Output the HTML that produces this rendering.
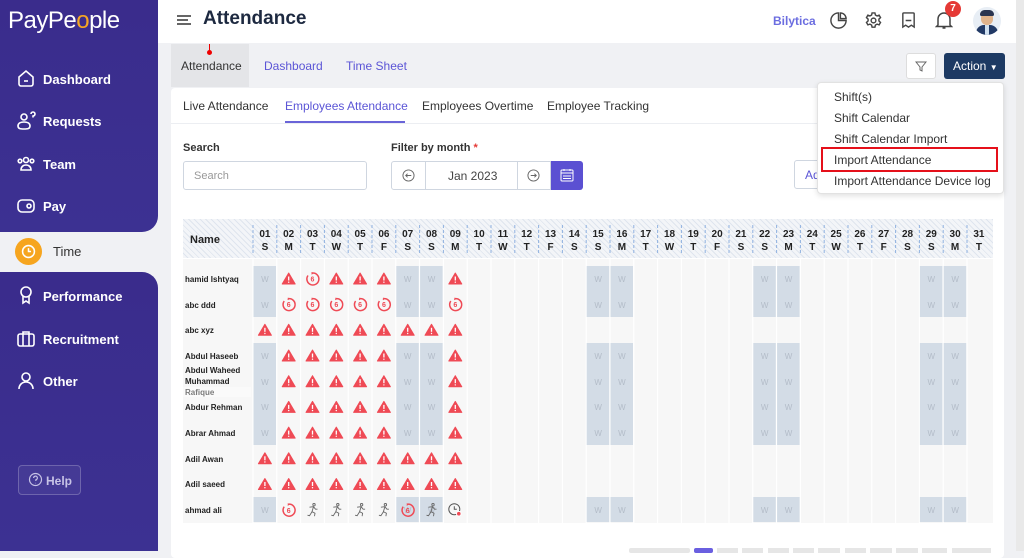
<!DOCTYPE html>
<html><head><meta charset="utf-8"><style>
*{box-sizing:border-box;margin:0;padding:0}
body{width:1024px;height:551px;overflow:hidden;background:#f0f1f4;font-family:"Liberation Sans",sans-serif;position:relative;color:#333}
.a{position:absolute}
.sb{background:linear-gradient(180deg,#3a2c8c,#3c3192)}
.mi{position:absolute;left:43px;color:#fff;font-size:13px;font-weight:bold}
.ic{position:absolute;left:16px}
.dd div{position:absolute;left:16px;font-size:12px;color:#333}
</style></head><body>
<!-- sidebar -->
<div class="a sb" style="left:0;top:0;width:158px;height:232px;border-radius:0 0 16px 0"></div>
<div class="a sb" style="left:0;top:272px;width:158px;height:279px;border-radius:0 16px 0 0"></div>
<div class="a" style="left:7px;top:233px;width:151px;height:38px;background:#f0f1f4;border-radius:19px 0 0 19px"></div>
<div class="a" style="left:8px;top:7px;color:#fff;font-size:24px;letter-spacing:-0.5px">PayPe<span style="color:#f5a623">o</span>ple</div>
<svg class="ic" style="top:68px" width="20" height="20" viewBox="0 0 20 20" fill="none" stroke="#fff" stroke-width="1.6"><path d="M3 9l7-6 7 6v7a2 2 0 0 1-2 2H5a2 2 0 0 1-2-2z"/><path d="M8 13h4"/></svg>
<div class="mi" style="top:72px">Dashboard</div>
<svg class="ic" style="top:111px" width="20" height="20" viewBox="0 0 20 20" fill="none" stroke="#fff" stroke-width="1.6"><circle cx="8" cy="6" r="3"/><path d="M2 15c0-3 3-4 6-4s6 1 6 4-3 3-6 3-6 0-6-3z"/><path d="M15 3a2 2 0 1 1 2 2v1.5"/></svg>
<div class="mi" style="top:114px">Requests</div>
<svg class="ic" style="top:154px" width="20" height="20" viewBox="0 0 20 20" fill="none" stroke="#fff" stroke-width="1.6"><circle cx="10" cy="6" r="2.5"/><circle cx="4" cy="7" r="1.8"/><circle cx="16" cy="7" r="1.8"/><path d="M5 16c0-3 2-5 5-5s5 2 5 5z"/></svg>
<div class="mi" style="top:157px">Team</div>
<svg class="ic" style="top:196px" width="20" height="20" viewBox="0 0 20 20" fill="none" stroke="#fff" stroke-width="1.6"><rect x="2" y="4" width="16" height="12" rx="4"/><circle cx="13" cy="10" r="2"/></svg>
<div class="mi" style="top:199px">Pay</div>
<div class="a" style="left:15px;top:238px;width:27px;height:27px;border-radius:50%;background:#f6a51f"></div>
<svg class="a" style="left:20px;top:243px" width="17" height="17" viewBox="0 0 20 20" fill="none" stroke="#fff" stroke-width="1.8"><circle cx="10" cy="10" r="7"/><path d="M10 6v4h3"/></svg>
<div class="a" style="left:53px;top:244px;font-size:13px;color:#333">Time</div>
<svg class="ic" style="top:285px" width="20" height="20" viewBox="0 0 20 20" fill="none" stroke="#fff" stroke-width="1.6"><circle cx="10" cy="7" r="5"/><path d="M7 11v7l3-2 3 2v-7"/></svg>
<div class="mi" style="top:289px">Performance</div>
<svg class="ic" style="top:329px" width="20" height="20" viewBox="0 0 20 20" fill="none" stroke="#fff" stroke-width="1.6"><rect x="2" y="5" width="16" height="12" rx="2"/><path d="M7 5V3h6v2M7 5v12M13 5v12"/></svg>
<div class="mi" style="top:332px">Recruitment</div>
<svg class="ic" style="top:371px" width="20" height="20" viewBox="0 0 20 20" fill="none" stroke="#fff" stroke-width="1.6"><circle cx="10" cy="6" r="4"/><path d="M3 18c0-4 3-7 7-7s7 3 7 7"/></svg>
<div class="mi" style="top:374px">Other</div>
<div class="a" style="left:18px;top:465px;width:63px;height:30px;border:1px solid rgba(255,255,255,.22);border-radius:4px;background:rgba(255,255,255,.05)"></div>
<svg class="a" style="left:28px;top:472px" width="15" height="15" viewBox="0 0 20 20" fill="none" stroke="#c7c3e6" stroke-width="1.6"><circle cx="10" cy="10" r="8"/><path d="M7.5 8a2.5 2.5 0 1 1 3 2.4V12M10 14.5v.5"/></svg>
<div class="a" style="left:46px;top:474px;font-size:12px;color:#c7c3e6;font-weight:bold">Help</div>

<!-- header -->
<div class="a" style="left:158px;top:0;width:858px;height:43px;background:#fff"></div>
<svg class="a" style="left:177px;top:14px" width="14" height="12"><path d="M0 2h14M0 6h11M0 10h14" stroke="#333" stroke-width="1.5"/></svg>
<div class="a" style="left:203px;top:8px;font-size:19px;font-weight:bold;color:#1d2940">Attendance</div>
<div class="a" style="left:773px;top:14px;font-size:12px;color:#6b6de0;font-weight:bold">Bilytica</div>
<svg class="a" style="left:829px;top:11px" width="19" height="19" viewBox="0 0 20 20" fill="none" stroke="#444" stroke-width="1.5"><path d="M10 2a8 8 0 1 0 8 8h-8z"/><path d="M12 2a6 6 0 0 1 6 6h-6z"/></svg>
<svg class="a" style="left:864px;top:11px" width="19" height="19" viewBox="0 0 20 20" fill="none" stroke="#444" stroke-width="1.5"><circle cx="10" cy="10" r="2.5"/><path d="M8.5 2h3l.5 2.2 1.8 1 2.1-.8 1.5 2.6-1.7 1.5v2l1.7 1.5-1.5 2.6-2.1-.8-1.8 1-.5 2.2h-3l-.5-2.2-1.8-1-2.1.8-1.5-2.6 1.7-1.5v-2L2.6 7l1.5-2.6 2.1.8 1.8-1z"/></svg>
<svg class="a" style="left:900px;top:11px" width="17" height="19" viewBox="0 0 18 20" fill="none" stroke="#444" stroke-width="1.5"><path d="M4 2h10a1 1 0 0 1 1 1v14l-3-2-3 2-3-2-3 2V3a1 1 0 0 1 1-1zM6 10h6"/></svg>
<svg class="a" style="left:935px;top:10px" width="18" height="20" viewBox="0 0 18 20" fill="none" stroke="#444" stroke-width="1.5"><path d="M3 15V9a6 6 0 0 1 12 0v6l1.5 1.5h-15zM7.5 18h3"/></svg>
<div class="a" style="left:945px;top:1px;width:16px;height:16px;border-radius:50%;background:#e53935;color:#fff;font-size:10px;font-weight:bold;text-align:center;line-height:16px">7</div>
<div class="a" style="left:973px;top:7px;width:28px;height:28px;border-radius:50%;background:#e8eef5;overflow:hidden">
<div class="a" style="left:8px;top:5px;width:12px;height:13px;border-radius:45%;background:#e1b48c"></div>
<div class="a" style="left:7px;top:3px;width:14px;height:6px;border-radius:6px 6px 2px 2px;background:#2b3550"></div>
<div class="a" style="left:3px;top:18px;width:22px;height:14px;border-radius:8px 8px 0 0;background:#223a66"></div>
<div class="a" style="left:12px;top:18px;width:4px;height:10px;background:#cfe0f0"></div></div>
<div class="a" style="left:1016px;top:0;width:8px;height:551px;background:#e9e9e9"></div>

<!-- tabs -->
<div class="a" style="left:171px;top:44px;width:78px;height:43px;background:#e4e5e8"></div>
<div class="a" style="left:209px;top:44px;width:1px;height:8px;background:#e00"></div>
<div class="a" style="left:207px;top:50px;width:5px;height:5px;border-radius:50%;background:#e00"></div>
<div class="a" style="left:181px;top:59px;font-size:12px;color:#333">Attendance</div>
<div class="a" style="left:264px;top:59px;font-size:12px;color:#5b55d6">Dashboard</div>
<div class="a" style="left:346px;top:59px;font-size:12px;color:#5b55d6">Time Sheet</div>
<div class="a" style="left:906px;top:53px;width:30px;height:26px;background:#fff;border:1px solid #ddd;border-radius:3px"></div>
<svg class="a" style="left:915px;top:60px" width="12" height="12" viewBox="0 0 12 12" fill="none" stroke="#666" stroke-width="1"><path d="M1 2h10L7 7v4L5 10V7z"/></svg>
<div class="a" style="left:944px;top:53px;width:61px;height:26px;background:#1d3a63;border-radius:3px;color:#fff;font-size:12px;line-height:26px;padding-left:9px">Action <span style="font-size:8px">▼</span></div>

<!-- card -->
<div class="a" style="left:171px;top:88px;width:833px;height:470px;background:#fff;border-radius:4px"></div>
<div class="a" style="left:171px;top:123px;width:833px;height:1px;background:#eceef2"></div>
<div class="a" style="left:183px;top:99px;font-size:12px;color:#333">Live Attendance</div>
<div class="a" style="left:285px;top:99px;font-size:12px;color:#5b55d6">Employees Attendance</div>
<div class="a" style="left:285px;top:121px;width:120px;height:2px;background:#6a64d8"></div>
<div class="a" style="left:422px;top:99px;font-size:12px;color:#333">Employees Overtime</div>
<div class="a" style="left:547px;top:99px;font-size:12px;color:#333">Employee Tracking</div>
<div class="a" style="left:183px;top:142px;font-size:11px;font-weight:bold;color:#333">Search</div>
<div class="a" style="left:183px;top:161px;width:184px;height:29px;border:1px solid #cfd6e0;border-radius:3px;font-size:11px;color:#999;padding:8px 0 0 10px">Search</div>
<div class="a" style="left:391px;top:142px;font-size:11px;font-weight:bold;color:#333">Filter by month <span style="color:#e53935">*</span></div>
<div class="a" style="left:391px;top:161px;width:160px;height:29px;border:1px solid #cfd6e0;border-radius:3px 0 0 3px"></div>
<div class="a" style="left:425px;top:161px;width:1px;height:29px;background:#cfd6e0"></div>
<div class="a" style="left:517px;top:161px;width:1px;height:29px;background:#cfd6e0"></div>
<svg class="a" style="left:402px;top:169px" width="13" height="13" viewBox="0 0 14 14" fill="none" stroke="#666" stroke-width="1"><circle cx="7" cy="7" r="6"/><path d="M10 7H4M6 5L4 7l2 2"/></svg>
<div class="a" style="left:448px;top:169px;font-size:12px;color:#444">Jan 2023</div>
<svg class="a" style="left:527px;top:169px" width="13" height="13" viewBox="0 0 14 14" fill="none" stroke="#666" stroke-width="1"><circle cx="7" cy="7" r="6"/><path d="M4 7h6M8 5l2 2-2 2"/></svg>
<div class="a" style="left:551px;top:161px;width:32px;height:29px;background:#5b50d2;border-radius:0 3px 3px 0"></div>
<svg class="a" style="left:560px;top:168px" width="14" height="14" viewBox="0 0 14 14" fill="none" stroke="#fff" stroke-width="1"><rect x="1" y="2" width="12" height="11" rx="1"/><path d="M1 5h12M4 1v2M10 1v2M3 8h8M3 10.5h8"/></svg>
<div class="a" style="left:794px;top:160px;width:40px;height:29px;border:1px solid #cfd6e0;border-radius:3px;font-size:12px;color:#5b55d6;padding:7px 0 0 10px">Ad</div>

<!-- table -->
<div class="a" style="left:183px;top:219px;width:810px;height:39px;background:repeating-linear-gradient(45deg,#f3f5f8 0 3px,#dfe5ee 3px 4px)"></div>
<div class="a" style="left:183px;top:258px;width:810px;height:265px;background:#fff"></div>
<svg class="a" style="left:183px;top:219px" width="810" height="305" font-family="Liberation Sans, sans-serif">
<defs>
<g id="t"><path d="M0 -6L6.5 5H-6.5Z" fill="#ef4a55" stroke="#ef4a55" stroke-width="1" stroke-linejoin="round"/><path d="M0 -2.5V1.5" stroke="#fff" stroke-width="1.3"/><circle cx="0" cy="3.2" r="0.7" fill="#fff"/></g>
<g id="c"><path d="M-4.5 -3.5A6 6 0 1 0 0 -6" fill="none" stroke="#ef4a55" stroke-width="1.5"/><path d="M-1 -6.5L0.5 -6L-1 -4.8" fill="none" stroke="#ef4a55" stroke-width="1"/><text x="0" y="2.6" font-size="7" text-anchor="middle" fill="#ef4a55" font-weight="bold">6</text></g>
<g id="r" fill="none" stroke="#666" stroke-width="0.9"><circle cx="1.5" cy="-5.5" r="1.2"/><path d="M-3 -3L1 -3.5L-0.5 1.5L2.5 3L2 6M-0.5 1.5L-3 5.5L-5 5M1 -3.5L3 -1L5 -1"/></g>
<g id="m" fill="none" stroke="#555" stroke-width="1"><circle cx="-1" cy="-1" r="5.5"/><path d="M-1 -4v3h2.5"/><circle cx="3.5" cy="3.5" r="2.3" fill="#ef4a55" stroke="#fff"/></g>
</defs>
<!-- cell bg -->
<g fill="#f7f7f7">
<rect x="0" y="40" width="810" height="264"/></g>
<g stroke="#fff" stroke-width="1.2">
<path d="M70 40V304M93.8 40V304M117.6 40V304M141.4 40V304M165.2 40V304M189 40V304M212.8 40V304M236.6 40V304M260.4 40V304M284.2 40V304M308 40V304M331.8 40V304M355.6 40V304M379.4 40V304M403.2 40V304M427 40V304M450.8 40V304M474.6 40V304M498.4 40V304M522.2 40V304M546 40V304M569.8 40V304M593.6 40V304M617.4 40V304M641.2 40V304M665 40V304M688.8 40V304M712.6 40V304M736.4 40V304M760.2 40V304M784 40V304"/>
</g>
<g fill="#d3dce6">
<rect x="70.5" y="47" width="22.5" height="51"/><rect x="213.3" y="47" width="22.5" height="51"/><rect x="237.1" y="47" width="22.5" height="51"/><rect x="403.7" y="47" width="22.5" height="51"/><rect x="427.5" y="47" width="22.5" height="51"/><rect x="570.3" y="47" width="22.5" height="51"/><rect x="594.1" y="47" width="22.5" height="51"/><rect x="736.9" y="47" width="22.5" height="51"/><rect x="760.7" y="47" width="22.5" height="51"/>
<rect x="70.5" y="124" width="22.5" height="102"/><rect x="213.3" y="124" width="22.5" height="102"/><rect x="237.1" y="124" width="22.5" height="102"/><rect x="403.7" y="124" width="22.5" height="102"/><rect x="427.5" y="124" width="22.5" height="102"/><rect x="570.3" y="124" width="22.5" height="102"/><rect x="594.1" y="124" width="22.5" height="102"/><rect x="736.9" y="124" width="22.5" height="102"/><rect x="760.7" y="124" width="22.5" height="102"/>
<rect x="70.5" y="278" width="22.5" height="25"/><rect x="213.3" y="278" width="22.5" height="25"/><rect x="237.1" y="278" width="22.5" height="25"/><rect x="403.7" y="278" width="22.5" height="25"/><rect x="427.5" y="278" width="22.5" height="25"/><rect x="570.3" y="278" width="22.5" height="25"/><rect x="594.1" y="278" width="22.5" height="25"/><rect x="736.9" y="278" width="22.5" height="25"/><rect x="760.7" y="278" width="22.5" height="25"/>
</g>
<!-- header -->
<g stroke="#8fb1e0" stroke-width="1" stroke-dasharray="3 2">
<path d="M70 6V36M93.8 6V36M117.6 6V36M141.4 6V36M165.2 6V36M189 6V36M212.8 6V36M236.6 6V36M260.4 6V36M284.2 6V36M308 6V36M331.8 6V36M355.6 6V36M379.4 6V36M403.2 6V36M427 6V36M450.8 6V36M474.6 6V36M498.4 6V36M522.2 6V36M546 6V36M569.8 6V36M593.6 6V36M617.4 6V36M641.2 6V36M665 6V36M688.8 6V36M712.6 6V36M736.4 6V36M760.2 6V36M784 6V36"/></g>
<text x="7" y="24" font-size="11" font-weight="bold" fill="#222">Name</text>
<g font-size="10" fill="#222" text-anchor="middle" font-weight="bold">
<text x="81.9" y="18">01</text><text x="105.7" y="18">02</text><text x="129.5" y="18">03</text><text x="153.3" y="18">04</text><text x="177.1" y="18">05</text><text x="200.9" y="18">06</text><text x="224.7" y="18">07</text><text x="248.5" y="18">08</text><text x="272.3" y="18">09</text><text x="296.1" y="18">10</text><text x="319.9" y="18">11</text><text x="343.7" y="18">12</text><text x="367.5" y="18">13</text><text x="391.3" y="18">14</text><text x="415.1" y="18">15</text><text x="438.9" y="18">16</text><text x="462.7" y="18">17</text><text x="486.5" y="18">18</text><text x="510.3" y="18">19</text><text x="534.1" y="18">20</text><text x="557.9" y="18">21</text><text x="581.7" y="18">22</text><text x="605.5" y="18">23</text><text x="629.3" y="18">24</text><text x="653.1" y="18">25</text><text x="676.9" y="18">26</text><text x="700.7" y="18">27</text><text x="724.5" y="18">28</text><text x="748.3" y="18">29</text><text x="772.1" y="18">30</text><text x="795.9" y="18">31</text>
<text x="81.9" y="31">S</text><text x="105.7" y="31">M</text><text x="129.5" y="31">T</text><text x="153.3" y="31">W</text><text x="177.1" y="31">T</text><text x="200.9" y="31">F</text><text x="224.7" y="31">S</text><text x="248.5" y="31">S</text><text x="272.3" y="31">M</text><text x="296.1" y="31">T</text><text x="319.9" y="31">W</text><text x="343.7" y="31">T</text><text x="367.5" y="31">F</text><text x="391.3" y="31">S</text><text x="415.1" y="31">S</text><text x="438.9" y="31">M</text><text x="462.7" y="31">T</text><text x="486.5" y="31">W</text><text x="510.3" y="31">T</text><text x="534.1" y="31">F</text><text x="557.9" y="31">S</text><text x="581.7" y="31">S</text><text x="605.5" y="31">M</text><text x="629.3" y="31">T</text><text x="653.1" y="31">W</text><text x="676.9" y="31">T</text><text x="700.7" y="31">F</text><text x="724.5" y="31">S</text><text x="748.3" y="31">S</text><text x="772.1" y="31">M</text><text x="795.9" y="31">T</text>
</g>
<!-- names -->
<g font-size="8" fill="#222" font-weight="bold">
<text x="2" y="63">hamid Ishtyaq</text><text x="2" y="89">abc ddd</text><text x="2" y="114">abc xyz</text><text x="2" y="140">Abdul Haseeb</text>
<text x="2" y="154">Abdul Waheed</text><text x="2" y="165">Muhammad</text><text x="2" y="176">Rafique</text>
<text x="2" y="191">Abdur Rehman</text><text x="2" y="217">Abrar Ahmad</text><text x="2" y="243">Adil Awan</text><text x="2" y="268">Adil saeed</text><text x="2" y="294">ahmad ali</text>
</g>
<rect x="0" y="168" width="68" height="10" fill="#fff" opacity="0.4"/>
<!-- W -->
<g font-size="8" fill="#b3bcc8" text-anchor="middle">
<text x="81.9" y="63">W</text><text x="224.7" y="63">W</text><text x="248.5" y="63">W</text><text x="415.1" y="63">W</text><text x="438.9" y="63">W</text><text x="581.7" y="63">W</text><text x="605.5" y="63">W</text><text x="748.3" y="63">W</text><text x="772.1" y="63">W</text>
<text x="81.9" y="89">W</text><text x="224.7" y="89">W</text><text x="248.5" y="89">W</text><text x="415.1" y="89">W</text><text x="438.9" y="89">W</text><text x="581.7" y="89">W</text><text x="605.5" y="89">W</text><text x="748.3" y="89">W</text><text x="772.1" y="89">W</text>
<text x="81.9" y="140">W</text><text x="224.7" y="140">W</text><text x="248.5" y="140">W</text><text x="415.1" y="140">W</text><text x="438.9" y="140">W</text><text x="581.7" y="140">W</text><text x="605.5" y="140">W</text><text x="748.3" y="140">W</text><text x="772.1" y="140">W</text>
<text x="81.9" y="166">W</text><text x="224.7" y="166">W</text><text x="248.5" y="166">W</text><text x="415.1" y="166">W</text><text x="438.9" y="166">W</text><text x="581.7" y="166">W</text><text x="605.5" y="166">W</text><text x="748.3" y="166">W</text><text x="772.1" y="166">W</text>
<text x="81.9" y="191">W</text><text x="224.7" y="191">W</text><text x="248.5" y="191">W</text><text x="415.1" y="191">W</text><text x="438.9" y="191">W</text><text x="581.7" y="191">W</text><text x="605.5" y="191">W</text><text x="748.3" y="191">W</text><text x="772.1" y="191">W</text>
<text x="81.9" y="217">W</text><text x="224.7" y="217">W</text><text x="248.5" y="217">W</text><text x="415.1" y="217">W</text><text x="438.9" y="217">W</text><text x="581.7" y="217">W</text><text x="605.5" y="217">W</text><text x="748.3" y="217">W</text><text x="772.1" y="217">W</text>
<text x="81.9" y="294">W</text><text x="224.7" y="294">W</text><text x="248.5" y="294">W</text><text x="415.1" y="294">W</text><text x="438.9" y="294">W</text><text x="581.7" y="294">W</text><text x="605.5" y="294">W</text><text x="748.3" y="294">W</text><text x="772.1" y="294">W</text>
</g>
<!-- icons -->
<use href="#t" x="105.7" y="60"/><use href="#c" x="129.5" y="60"/><use href="#t" x="153.3" y="60"/><use href="#t" x="177.1" y="60"/><use href="#t" x="200.9" y="60"/><use href="#t" x="272.3" y="60"/>
<use href="#c" x="105.7" y="85.6"/><use href="#c" x="129.5" y="85.6"/><use href="#c" x="153.3" y="85.6"/><use href="#c" x="177.1" y="85.6"/><use href="#c" x="200.9" y="85.6"/><use href="#c" x="272.3" y="85.6"/>
<use href="#t" x="81.9" y="111.3"/><use href="#t" x="105.7" y="111.3"/><use href="#t" x="129.5" y="111.3"/><use href="#t" x="153.3" y="111.3"/><use href="#t" x="177.1" y="111.3"/><use href="#t" x="200.9" y="111.3"/><use href="#t" x="224.7" y="111.3"/><use href="#t" x="248.5" y="111.3"/><use href="#t" x="272.3" y="111.3"/>
<use href="#t" x="105.7" y="137"/><use href="#t" x="129.5" y="137"/><use href="#t" x="153.3" y="137"/><use href="#t" x="177.1" y="137"/><use href="#t" x="200.9" y="137"/><use href="#t" x="272.3" y="137"/>
<use href="#t" x="105.7" y="162.7"/><use href="#t" x="129.5" y="162.7"/><use href="#t" x="153.3" y="162.7"/><use href="#t" x="177.1" y="162.7"/><use href="#t" x="200.9" y="162.7"/><use href="#t" x="272.3" y="162.7"/>
<use href="#t" x="105.7" y="188.4"/><use href="#t" x="129.5" y="188.4"/><use href="#t" x="153.3" y="188.4"/><use href="#t" x="177.1" y="188.4"/><use href="#t" x="200.9" y="188.4"/><use href="#t" x="272.3" y="188.4"/>
<use href="#t" x="105.7" y="214.1"/><use href="#t" x="129.5" y="214.1"/><use href="#t" x="153.3" y="214.1"/><use href="#t" x="177.1" y="214.1"/><use href="#t" x="200.9" y="214.1"/><use href="#t" x="272.3" y="214.1"/>
<use href="#t" x="81.9" y="239.8"/><use href="#t" x="105.7" y="239.8"/><use href="#t" x="129.5" y="239.8"/><use href="#t" x="153.3" y="239.8"/><use href="#t" x="177.1" y="239.8"/><use href="#t" x="200.9" y="239.8"/><use href="#t" x="224.7" y="239.8"/><use href="#t" x="248.5" y="239.8"/><use href="#t" x="272.3" y="239.8"/>
<use href="#t" x="81.9" y="265.5"/><use href="#t" x="105.7" y="265.5"/><use href="#t" x="129.5" y="265.5"/><use href="#t" x="153.3" y="265.5"/><use href="#t" x="177.1" y="265.5"/><use href="#t" x="200.9" y="265.5"/><use href="#t" x="224.7" y="265.5"/><use href="#t" x="248.5" y="265.5"/><use href="#t" x="272.3" y="265.5"/>
<use href="#c" x="105.7" y="291.2"/><use href="#r" x="129.5" y="291.2"/><use href="#r" x="153.3" y="291.2"/><use href="#r" x="177.1" y="291.2"/><use href="#r" x="200.9" y="291.2"/><use href="#c" x="224.7" y="291.2"/><use href="#r" x="248.5" y="291.2"/><use href="#m" x="272.3" y="291.2"/>
</svg>
<!-- pagination -->
<div class="a" style="left:629px;top:548px;width:61px;height:5px;background:#e6e6e6;border-radius:2px"></div>
<div class="a" style="left:694px;top:548px;width:19px;height:5px;background:#6a5fe0;border-radius:2px"></div>
<div class="a" style="left:717px;top:548px;width:21px;height:5px;background:#e6e6e6"></div>
<div class="a" style="left:742px;top:548px;width:21px;height:5px;background:#e6e6e6"></div>
<div class="a" style="left:768px;top:548px;width:21px;height:5px;background:#e6e6e6"></div>
<div class="a" style="left:793px;top:548px;width:21px;height:5px;background:#e6e6e6"></div>
<div class="a" style="left:818px;top:548px;width:22px;height:5px;background:#e6e6e6"></div>
<div class="a" style="left:845px;top:548px;width:21px;height:5px;background:#e6e6e6"></div>
<div class="a" style="left:870px;top:548px;width:22px;height:5px;background:#e6e6e6"></div>
<div class="a" style="left:896px;top:548px;width:22px;height:5px;background:#e6e6e6"></div>
<div class="a" style="left:922px;top:548px;width:25px;height:5px;background:#e6e6e6"></div>
<div class="a" style="left:952px;top:548px;width:39px;height:5px;background:#e6e6e6"></div>

<!-- dropdown -->
<div class="a dd" style="left:817px;top:82px;width:187px;height:112px;background:#fff;border:1px solid #e2e2e2;border-radius:4px;box-shadow:0 2px 6px rgba(0,0,0,.12)">
<div style="top:7px">Shift(s)</div>
<div style="top:28px">Shift Calendar</div>
<div style="top:49px">Shift Calendar Import</div>
<div style="top:70px">Import Attendance</div>
<div style="top:91px">Import Attendance Device log</div>
</div>
<div class="a" style="left:821px;top:147px;width:177px;height:25px;border:2px solid #e5101a"></div>
</body></html>
